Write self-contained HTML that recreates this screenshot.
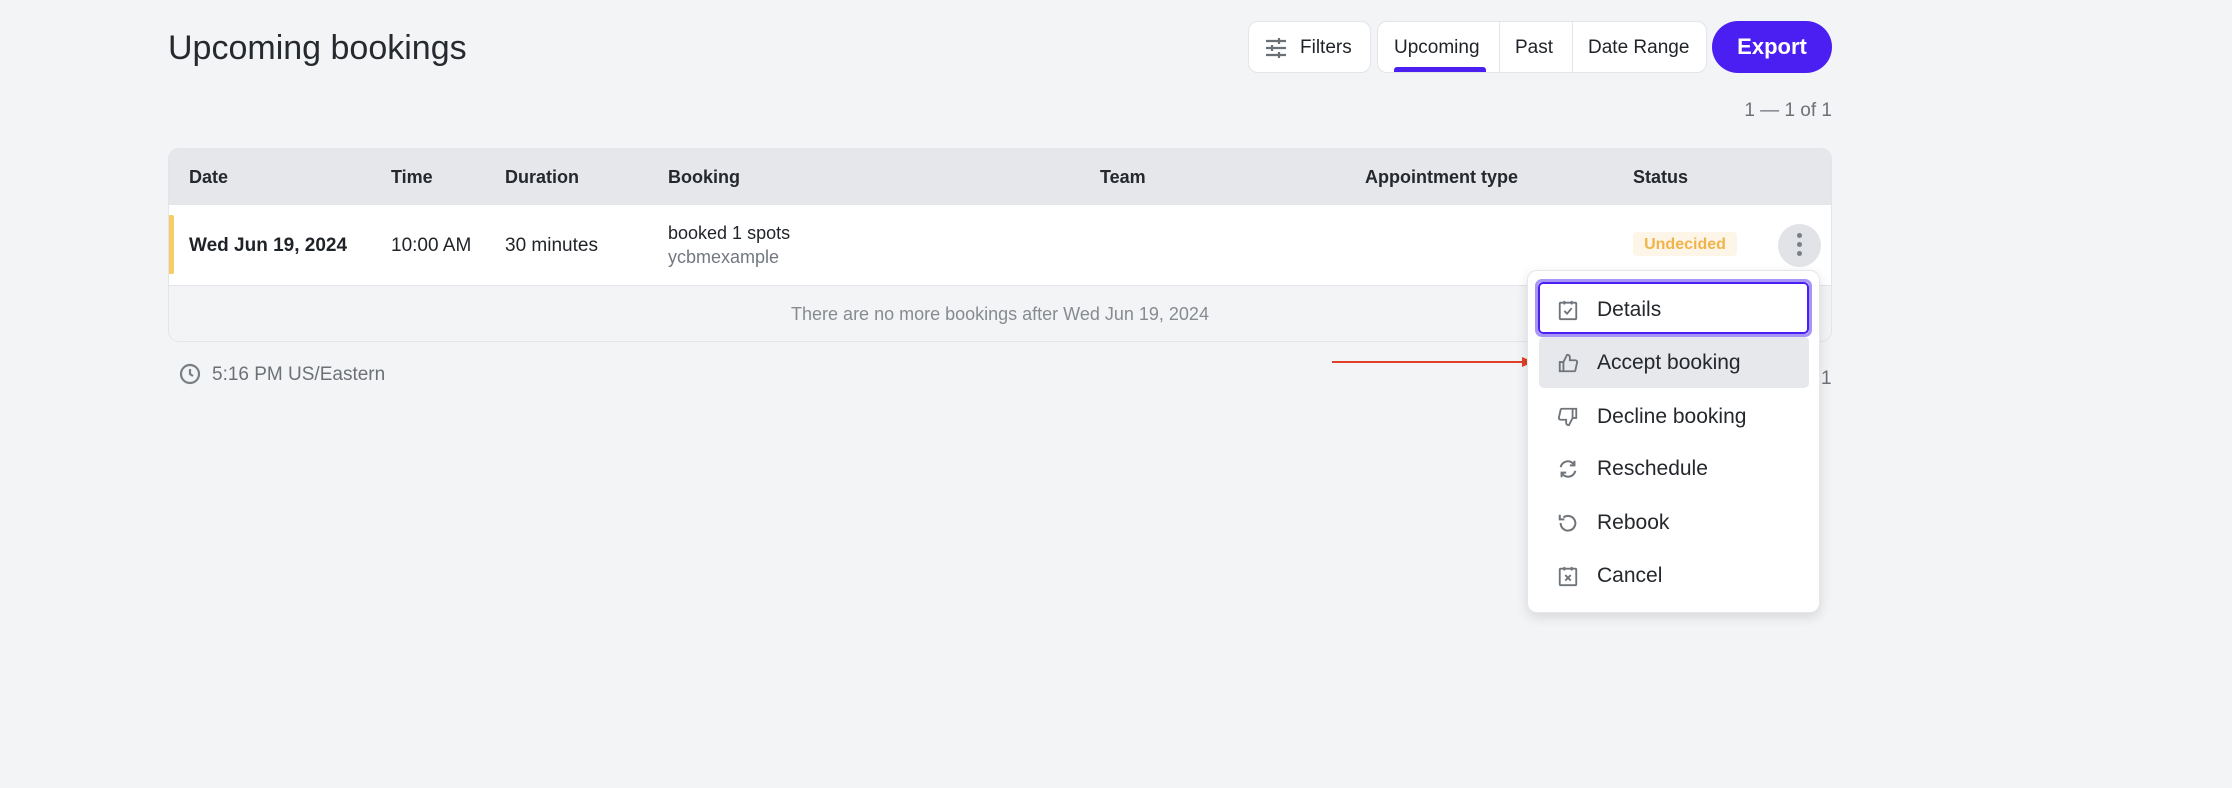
<!DOCTYPE html>
<html><head><meta charset="utf-8"><style>
*{box-sizing:border-box;margin:0;padding:0}
body{width:2232px;height:788px;background:#f3f4f6;font-family:"Liberation Sans",sans-serif;color:#1f2328;position:relative;overflow:hidden}
.a{position:absolute}
.btn{position:absolute;top:21px;height:52px;background:#fff;border:1px solid #e3e5e8;border-radius:10px;font-size:19px;display:flex;align-items:center;padding-top:2px}
.th{position:absolute;top:167px;font-size:18px;font-weight:bold;color:#25282c}
.mi{position:absolute;left:1539px;width:270px;height:50px;display:flex;align-items:center;font-size:21px;color:#24272b}
.mi svg{position:absolute;left:18px;width:22px;height:22px}
.mi span{position:absolute;left:58px}
</style></head><body>
<div class="a" style="left:168px;top:29px;font-size:34px;color:#26292d">Upcoming bookings</div>

<div class="btn" style="left:1248px;width:123px">
<svg class="a" style="left:16px;top:15px" width="22" height="22" viewBox="0 0 22 22" stroke="#6b7075" stroke-width="2.2" fill="none"><path d="M1 4h20M1 11h20M1 18h20"/><path d="M14 1v6M7 8v6M14 15v6"/></svg>
<span class="a" style="left:51px">Filters</span></div>
<div class="btn" style="left:1377px;width:330px">
<span class="a" style="left:16px">Upcoming</span>
<div class="a" style="left:121px;top:0;width:1px;height:50px;background:#e3e5e8"></div>
<span class="a" style="left:137px">Past</span>
<div class="a" style="left:194px;top:0;width:1px;height:50px;background:#e3e5e8"></div>
<span class="a" style="left:210px">Date Range</span>
<div class="a" style="left:16px;top:45px;width:92px;height:5px;background:#4a1ff0;border-radius:3px 3px 0 0"></div>
</div>
<div class="a" style="left:1712px;top:21px;width:120px;height:52px;background:#4b1ff1;border-radius:26px;color:#fff;font-size:22px;font-weight:bold;display:flex;align-items:center;justify-content:center">Export</div>
<div class="a" style="right:400px;top:100px;font-size:19px;color:#6d7177">1 — 1 of 1</div>

<div class="a" style="left:168px;top:148px;width:1664px;height:194px;border:1px solid #e3e5e8;border-radius:11px;overflow:hidden;background:#f3f4f6">
<div class="a" style="left:0;top:0;width:100%;height:56px;background:#e5e7ea"></div>
<div class="a" style="left:0;top:56px;width:100%;height:81px;background:#fff;border-bottom:1px solid #e3e5e8"></div>
<div class="a" style="left:0;top:66px;width:5px;height:59px;background:#f8cd66;border-radius:0 2px 2px 0"></div>
</div>
<div class="th" style="left:189px">Date</div>
<div class="th" style="left:391px">Time</div>
<div class="th" style="left:505px">Duration</div>
<div class="th" style="left:668px">Booking</div>
<div class="th" style="left:1100px">Team</div>
<div class="th" style="left:1365px">Appointment type</div>
<div class="th" style="left:1633px">Status</div>

<div class="a" style="left:189px;top:235px;font-size:19px;font-weight:bold">Wed Jun 19, 2024</div>
<div class="a" style="left:391px;top:235px;font-size:19px">10:00 AM</div>
<div class="a" style="left:505px;top:235px;font-size:19px">30 minutes</div>
<div class="a" style="left:668px;top:223px;font-size:18px">booked 1 spots</div>
<div class="a" style="left:668px;top:247px;font-size:18px;color:#737880">ycbmexample</div>
<div class="a" style="left:1633px;top:232px;width:104px;height:24px;background:#fdf5e8;border-radius:4px;color:#f0b54a;font-size:16px;font-weight:bold;display:flex;align-items:center;justify-content:center;padding-top:2px">Undecided</div>
<div class="a" style="left:1778px;top:224px;width:43px;height:43px;border-radius:50%;background:#e1e3e6"></div>
<div class="a" style="left:1797px;top:233px;width:5px;height:5px;border-radius:50%;background:#7a7f85;box-shadow:0 9px 0 #7a7f85,0 18px 0 #7a7f85"></div>
<div class="a" style="left:0;width:2000px;top:304px;text-align:center;font-size:18px;color:#878b90">There are no more bookings after Wed Jun 19, 2024</div>

<svg class="a" style="left:179px;top:363px" width="22" height="22" viewBox="0 0 22 22" fill="none" stroke="#7a7f85" stroke-width="2.2"><circle cx="11" cy="11" r="9"/><path d="M11 6v5l3 2"/></svg>
<div class="a" style="left:212px;top:364px;font-size:19px;color:#6d7177">5:16 PM US/Eastern</div>
<div class="a" style="left:1821px;top:368px;font-size:19px;color:#6d7177">1</div>

<svg class="a" style="left:1332px;top:356px" width="206" height="12"><path d="M0 6h192" stroke="#e0402a" stroke-width="2"/><path d="M190 1l12 5-12 5z" fill="#e0402a"/></svg>

<div class="a" style="left:1527px;top:270px;width:293px;height:343px;background:#fff;border:1px solid #e5e7ea;border-radius:10px;box-shadow:0 4px 12px rgba(0,0,0,.12)"></div>
<div class="a" style="left:1535px;top:279px;width:277px;height:58px;border:3px solid #a895f8;border-radius:7px"></div>
<div class="a" style="left:1538px;top:282px;width:271px;height:52px;border:2px solid #4b1ff1;border-radius:5px"></div>
<div class="a" style="left:1539px;top:337px;width:270px;height:51px;background:#e6e8eb;border-radius:5px"></div>

<div class="mi" style="top:285px"><svg viewBox="0 0 24 24" fill="none" stroke="#6f747a" stroke-width="2"><rect x="3" y="4" width="18" height="18" rx="1"/><path d="M8 2v4M16 2v4M8 13l3 3 5-6"/></svg><span>Details</span></div>
<div class="mi" style="top:338px"><svg viewBox="0 0 24 24" fill="none" stroke="#6f747a" stroke-width="2"><path d="M3 11h4v10H3zM7 11l4-8c2 0 3 1 3 3v3h6c1 0 2 1 2 2l-2 9c0 1-1 1-2 1H7"/></svg><span>Accept booking</span></div>
<div class="mi" style="top:392px"><svg viewBox="0 0 24 24" fill="none" stroke="#6f747a" stroke-width="2"><path d="M17 3h4v10h-4zM17 13l-4 8c-2 0-3-1-3-3v-3H4c-1 0-2-1-2-2l2-9c0-1 1-1 2-1h11"/></svg><span>Decline booking</span></div>
<div class="mi" style="top:444px"><svg viewBox="0 0 24 24" fill="none" stroke="#6f747a" stroke-width="2.2"><path d="M4 10a8 8 0 0 1 15-2M20 14a8 8 0 0 1-15 2"/><path d="M19 3v5h-5M5 21v-5h5"/></svg><span>Reschedule</span></div>
<div class="mi" style="top:498px"><svg viewBox="0 0 24 24" fill="none" stroke="#6f747a" stroke-width="2.2"><path d="M4 12a8 8 0 1 0 3-6"/><path d="M3 3v5h5"/></svg><span>Rebook</span></div>
<div class="mi" style="top:551px"><svg viewBox="0 0 24 24" fill="none" stroke="#6f747a" stroke-width="2"><rect x="3" y="4" width="18" height="18" rx="1"/><path d="M8 2v4M16 2v4M9 11l6 6M15 11l-6 6"/></svg><span>Cancel</span></div>
</body></html>
